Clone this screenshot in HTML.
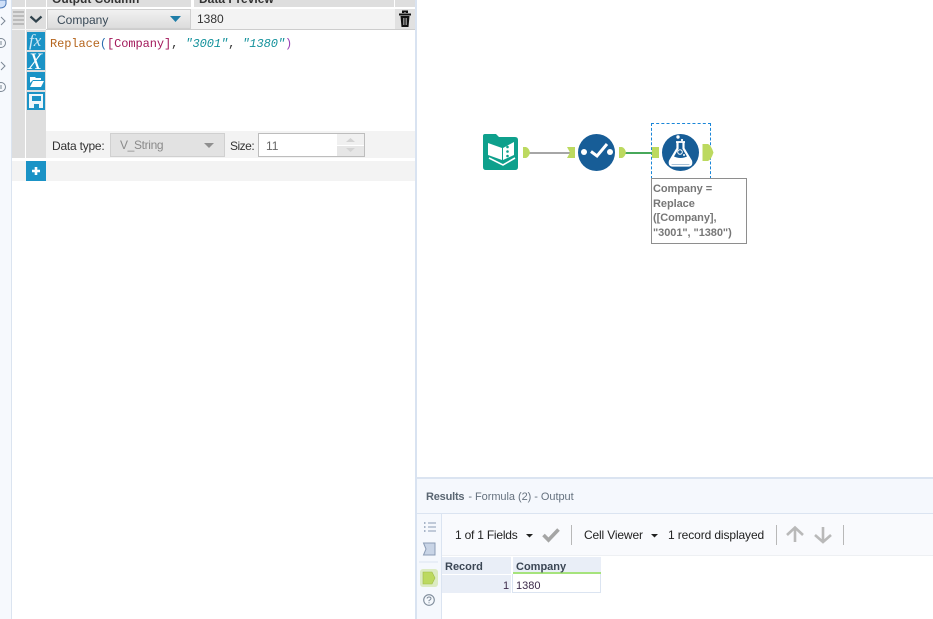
<!DOCTYPE html>
<html><head><meta charset="utf-8"><style>
html,body{margin:0;padding:0;background:#fff;width:933px;height:619px;overflow:hidden}
body{position:relative;font-family:"Liberation Sans",sans-serif;font-size:12px;color:#2b3440}
.a{position:absolute}
.t{position:absolute;white-space:nowrap;line-height:14px}
svg{position:absolute;overflow:visible}
</style></head><body>
<!-- left strip -->
<div class="a" style="left:0;top:0;width:11px;height:619px;background:#f6f9fd"></div>
<div class="a" style="left:11px;top:0;width:1px;height:619px;background:#dbe4f0"></div>
<svg style="left:0;top:0" width="11" height="100" fill="none" stroke="#7b8794" stroke-width="1">
<path d="M0 0H6V4Q5 8 0 8" fill="#cfe0f8" stroke="#4a78b8"/>
<path d="M1 17L5 21L1 25"/><circle cx="1" cy="43" r="4.500"/><path d="M1 41V45"/>
<path d="M1 62L5 66L1 70"/><circle cx="1" cy="87" r="4.500"/><path d="M1 85V89"/>
</svg>
<!-- header -->
<div class="a" style="left:12px;top:0;width:13px;height:7px;background:#dedede"></div>
<div class="a" style="left:26px;top:0;width:20px;height:7px;background:#dedede"></div>
<div class="a" style="left:47px;top:0;width:144px;height:7px;background:#dedede;overflow:hidden"><div class="t" style="left:5px;top:-8px;font-weight:bold;color:#333;font-size:12px">Output Column</div></div>
<div class="a" style="left:194px;top:0;width:200px;height:7px;background:#dedede;overflow:hidden"><div class="t" style="left:5px;top:-8px;font-weight:bold;color:#333;font-size:12px">Data Preview</div></div>
<div class="a" style="left:395px;top:0;width:20px;height:7px;background:#dedede"></div>
<!-- row -->
<div class="a" style="left:12px;top:9px;width:13px;height:149px;background:#dedede"></div>
<div class="a" style="left:13px;top:11px;width:11px;height:2px;background:#bbb"></div>
<div class="a" style="left:13px;top:15px;width:11px;height:2px;background:#bbb"></div>
<div class="a" style="left:13px;top:19px;width:11px;height:2px;background:#bbb"></div>
<div class="a" style="left:13px;top:23px;width:11px;height:2px;background:#bbb"></div>
<div class="a" style="left:26px;top:9px;width:20px;height:149px;background:#dedede"></div>
<svg style="left:26px;top:9px" width="20" height="20"><path d="M4.500 7.500L10 12.500L15.500 7.500" fill="none" stroke="#30424c" stroke-width="2.200"/></svg>
<div class="a" style="left:47px;top:9px;width:144px;height:20px;background:linear-gradient(#f1f1f1,#dcdcdc);border:1px solid #cfcfcf;box-sizing:border-box"></div>
<div class="t" style="left:57px;top:13px;color:#3a4a58">Company</div>
<svg style="left:170px;top:16px" width="11" height="7"><path d="M0 0H11L5.500 6Z" fill="#1f7ea8"/></svg>
<div class="a" style="left:191px;top:9px;width:204px;height:20px;background:#f3f3f3"></div>
<div class="t" style="left:197px;top:12px;color:#333">1380</div>
<div class="a" style="left:395px;top:9px;width:20px;height:20px;background:#e1e1e1"></div>
<svg style="left:398px;top:10px" width="14" height="18"><path d="M1 4.500H13M5 3V1.500H9V3" fill="none" stroke="#111" stroke-width="2"/><path d="M2.500 6H11.500L10.500 17H3.500Z" fill="#111"/><path d="M5.500 8V15M7 8V15M8.500 8V15" stroke="#ddd" stroke-width=".6"/></svg>
<div class="a" style="left:46px;top:29px;width:369px;height:1px;background:#cdcdcd"></div>
<div class="a" style="left:12px;top:29px;width:34px;height:1px;background:#f5f5f5"></div>
<!-- side buttons -->
<div class="a" style="left:27px;top:32px;width:18px;height:18px;background:#1b93c6"></div>
<div class="t" style="left:29px;top:32px;color:#cfe9f5;font:italic 17px/17px 'Liberation Serif',serif">fx</div>
<div class="a" style="left:27px;top:52px;width:18px;height:18px;background:#1b93c6"></div>
<div class="t" style="left:28px;top:52px;color:#fff;font:italic 23px/19px 'Liberation Serif',serif">X</div>
<div class="a" style="left:27px;top:72px;width:18px;height:18px;background:#1b93c6"></div>
<svg style="left:27px;top:72px" width="18" height="18"><path d="M3 5H8L9 6H14V8H6L3 11Z" fill="#fff"/><path d="M6 9H17L14 15H3Z" fill="#fff"/></svg>
<div class="a" style="left:27px;top:92px;width:18px;height:18px;background:#1b93c6"></div>
<svg style="left:27px;top:92px" width="18" height="18"><path d="M2 2H16V16H2Z" fill="#eef7fb"/><path d="M5 4H14V9H5Z" fill="#1b93c6"/><path d="M7 12H12V16H7Z" fill="#1b93c6"/></svg>
<!-- expression -->
<div class="t" style="left:50px;top:37px;font:12px/15px 'Liberation Mono','DejaVu Sans Mono',monospace;letter-spacing:-.08px"><span style="color:#b5651d">Replace</span><span style="color:#2b6cb0">(</span><span style="color:#a3195b">[Company]</span><span style="color:#333">,</span> <i style="color:#12919b">"3001"</i><span style="color:#333">,</span> <i style="color:#12919b">"1380"</i><span style="color:#9a3fb5">)</span></div>
<!-- datatype row -->
<div class="a" style="left:46px;top:131px;width:369px;height:27px;background:#f3f3f3"></div>
<div class="t" style="left:52px;top:139px;color:#333;letter-spacing:-.22px">Data type:</div>
<div class="a" style="left:110px;top:133px;width:115px;height:24px;background:#e2e2e2;border:1px solid #d0d0d0;box-sizing:border-box"></div>
<div class="t" style="left:120px;top:138px;color:#8a8a8a;letter-spacing:-.35px">V_String</div>
<svg style="left:204px;top:143px" width="10" height="6"><path d="M0 0H10L5 5Z" fill="#8f8f8f"/></svg>
<div class="t" style="left:230px;top:139px;color:#333;letter-spacing:-.5px">Size:</div>
<div class="a" style="left:258px;top:133px;width:107px;height:24px;background:#fff;border:1px solid #bdbdbd;box-sizing:border-box"></div>
<div class="t" style="left:266px;top:139px;color:#666">11</div>
<div class="a" style="left:337px;top:134px;width:27px;height:11px;background:#f0f0f0"></div>
<div class="a" style="left:337px;top:146px;width:27px;height:10px;background:#e6e6e6"></div>
<svg style="left:345px;top:137px" width="11" height="17"><path d="M1 5L5.500 1L10 5Z" fill="#d3d3d3"/><path d="M1 11H10L5.500 15Z" fill="#d3d3d3"/></svg>
<!-- add row -->
<div class="a" style="left:12px;top:161px;width:403px;height:20px;background:#f3f3f3"></div>
<div class="a" style="left:26px;top:161px;width:20px;height:20px;background:#1b93c6"></div>
<svg style="left:26px;top:161px" width="20" height="20"><path d="M10 6V14M6 10H14" stroke="#fff" stroke-width="2.600"/></svg>
<!-- divider -->
<div class="a" style="left:415px;top:0;width:2px;height:619px;background:#d9e3f1"></div>
<!-- selection box -->
<div class="a" style="left:651px;top:123px;width:60px;height:56px;border:1px dashed #1a86d8;border-bottom:none;box-sizing:border-box"></div>
<!-- canvas tools -->
<svg style="left:470px;top:115px" width="290" height="75">
<line x1="59" y1="38" x2="100" y2="38" stroke="#a6a6a6" stroke-width="2"/>
<line x1="154" y1="38" x2="186" y2="38" stroke="#47a85a" stroke-width="2"/>
<path d="M13 22V21Q13 19 15 19H26L29 22H45Q48 22 48 25V52Q48 55 45 55H16Q13 55 13 52Z" fill="#0ea08c"/>
<path d="M18 28L32 33V45L18 40Z" fill="#fff"/><path d="M33 33L44 27V40L33 45Z" fill="#fff"/>
<path d="M19 43L33 50L45 43" fill="none" stroke="#fff" stroke-width="1.600"/>
<circle cx="37.500" cy="32" r="1.300" fill="#0ea08c"/><circle cx="37.500" cy="36.500" r="1.300" fill="#0ea08c"/><circle cx="37.500" cy="41" r="1.300" fill="#0ea08c"/>
<path d="M53 32H56Q59 33 60 37.500Q59 42 56 43H53Z" fill="#bcd95f"/>
<path d="M97 32H105V43H97L100 37.500Z" fill="#bcd95f"/>
<circle cx="126.500" cy="37.500" r="18.500" fill="#175d97"/>
<circle cx="114" cy="37" r="3" fill="#fff"/><circle cx="140" cy="37" r="3" fill="#fff"/>
<path d="M121 36.500L127 41L137 29" fill="none" stroke="#fff" stroke-width="3"/>
<path d="M149 32H152Q155 33 156 37.500Q155 42 152 43H149Z" fill="#bcd95f"/>
<path d="M182 32H189V43H182Z" fill="#bcd95f"/>
<circle cx="210.500" cy="37.500" r="18.500" fill="#175d97"/>
<circle cx="208" cy="22" r="1.700" fill="#fff"/><circle cx="212" cy="25" r="1.100" fill="#fff"/>
<path d="M207.500 27V33.500L200 46Q199 50.500 202.500 50.500H218.500Q222 50.500 221 46L213.500 33.500V27" fill="#175d97" stroke="#fff" stroke-width="2.200"/>
<path d="M206 27H215" stroke="#fff" stroke-width="1.800"/>
<path d="M203 41Q210.500 45 218 41L221 49H200Z" fill="#fff"/>
<circle cx="210" cy="37" r="2.300" fill="none" stroke="#fff" stroke-width="1"/>
<circle cx="214" cy="40" r="1" fill="#fff"/>
<path d="M232.500 29H238Q241 30 243.500 37.500Q241 45 238 46H232.500Z" fill="#bcd95f"/>
</svg>
<div class="a" style="left:651px;top:178px;width:96px;height:66px;background:#fff;border:1px solid #8e8e8e;box-sizing:border-box"></div>
<div class="t" style="left:653px;top:182px;font-weight:bold;font-size:11px;line-height:14.700px;color:#777;letter-spacing:-.06px">Company =<br>Replace<br>([Company],<br>"3001", "1380")</div>
<!-- results -->
<div class="a" style="left:417px;top:477px;width:516px;height:2px;background:#dbe4f1"></div>
<div class="a" style="left:417px;top:479px;width:516px;height:34px;background:#f5f8fd"></div>
<div class="a" style="left:417px;top:513px;width:516px;height:1px;background:#dbe4f1"></div>
<div class="t" style="left:426px;top:490px;font-size:11px;color:#66727f"><b style="color:#5a6672;letter-spacing:-.2px">Results</b><span style="margin-left:4px;letter-spacing:-.05px">- Formula (2) - Output</span></div>
<div class="a" style="left:417px;top:514px;width:24px;height:105px;background:#f5f8fd"></div>
<div class="a" style="left:441px;top:514px;width:1px;height:105px;background:#dbe4f1"></div>
<div class="a" style="left:442px;top:514px;width:491px;height:41px;background:#f9fafd"></div>
<div class="a" style="left:442px;top:555px;width:491px;height:1px;background:#eef0f3"></div>
<svg style="left:417px;top:514px" width="24" height="100" fill="none">
<path d="M7 9H8.500M7 13H8.500M7 17H8.500" stroke="#8b9cb5" stroke-width="1.400"/><path d="M11 9H19M11 13H19M11 17H19" stroke="#8b9cb5"/>
<path d="M6.500 29H18V41H6.500L9 35Z" fill="#c8d4e6" stroke="#8b9cb5"/>
<path d="M2 48H21" stroke="#dbe4f1"/>
<rect x="3" y="55" width="18" height="18" rx="3" fill="#dcebc2"/>
<path d="M6 58H15L18 64L15 70H6Z" fill="#bcd95f" stroke="#9fbb46" stroke-width=".6"/>
<circle cx="12" cy="86" r="5.300" stroke="#7f8c9b" stroke-width="1.100"/>
<path d="M10 84.500Q10.500 83 12 83Q14 83 14 84.500Q14 85.500 12 86.500V87.300M12 88.300V89.300" stroke="#7f8c9b"/>
</svg>
<div class="t" style="left:455px;top:528px;color:#222;letter-spacing:-.22px">1 of 1 Fields</div>
<svg style="left:526px;top:534px" width="7" height="4"><path d="M0 0H7L3.500 3.500Z" fill="#222"/></svg>
<svg style="left:542px;top:527px" width="18" height="15"><path d="M1.500 8L6.500 13L16.500 2.500" fill="none" stroke="#a5a5a5" stroke-width="3.600"/></svg>
<div class="a" style="left:571px;top:525px;width:1px;height:20px;background:#b8b8b8"></div>
<div class="t" style="left:584px;top:528px;color:#222;letter-spacing:-.15px">Cell Viewer</div>
<svg style="left:651px;top:534px" width="7" height="4"><path d="M0 0H7L3.500 3.500Z" fill="#222"/></svg>
<div class="t" style="left:668px;top:528px;color:#222;letter-spacing:-.11px">1 record displayed</div>
<div class="a" style="left:776px;top:525px;width:1px;height:20px;background:#b8b8b8"></div>
<svg style="left:786px;top:526px" width="46" height="18" fill="none" stroke="#b9b9b9" stroke-width="2.600"><path d="M1 9L9 1.500L17 9M9 2V16"/><path d="M29 9L37 16L45 9M37 1V15"/></svg>
<div class="a" style="left:843px;top:525px;width:1px;height:20px;background:#b8b8b8"></div>
<!-- table -->
<div class="a" style="left:442px;top:557px;width:69px;height:17px;background:#e9eef7"></div>
<div class="a" style="left:513px;top:557px;width:88px;height:15px;background:#e9eef7"></div>
<div class="a" style="left:513px;top:572px;width:88px;height:2px;background:#a6e37c"></div>
<div class="t" style="left:445px;top:560px;font-size:11px;font-weight:bold;color:#3b4654">Record</div>
<div class="t" style="left:516px;top:560px;font-size:11px;font-weight:bold;color:#3b4654">Company</div>
<div class="a" style="left:442px;top:575px;width:69px;height:18px;background:#e9eef7"></div>
<div class="a" style="left:512px;top:574px;width:89px;height:19px;background:#fff;border:1px solid #dbe4f1;border-top:none;box-sizing:border-box"></div>
<div class="t" style="left:503px;top:579px;font-size:11px;color:#3c2a4a">1</div>
<div class="t" style="left:516px;top:579px;font-size:11px;color:#3c2a4a">1380</div>
</body></html>
